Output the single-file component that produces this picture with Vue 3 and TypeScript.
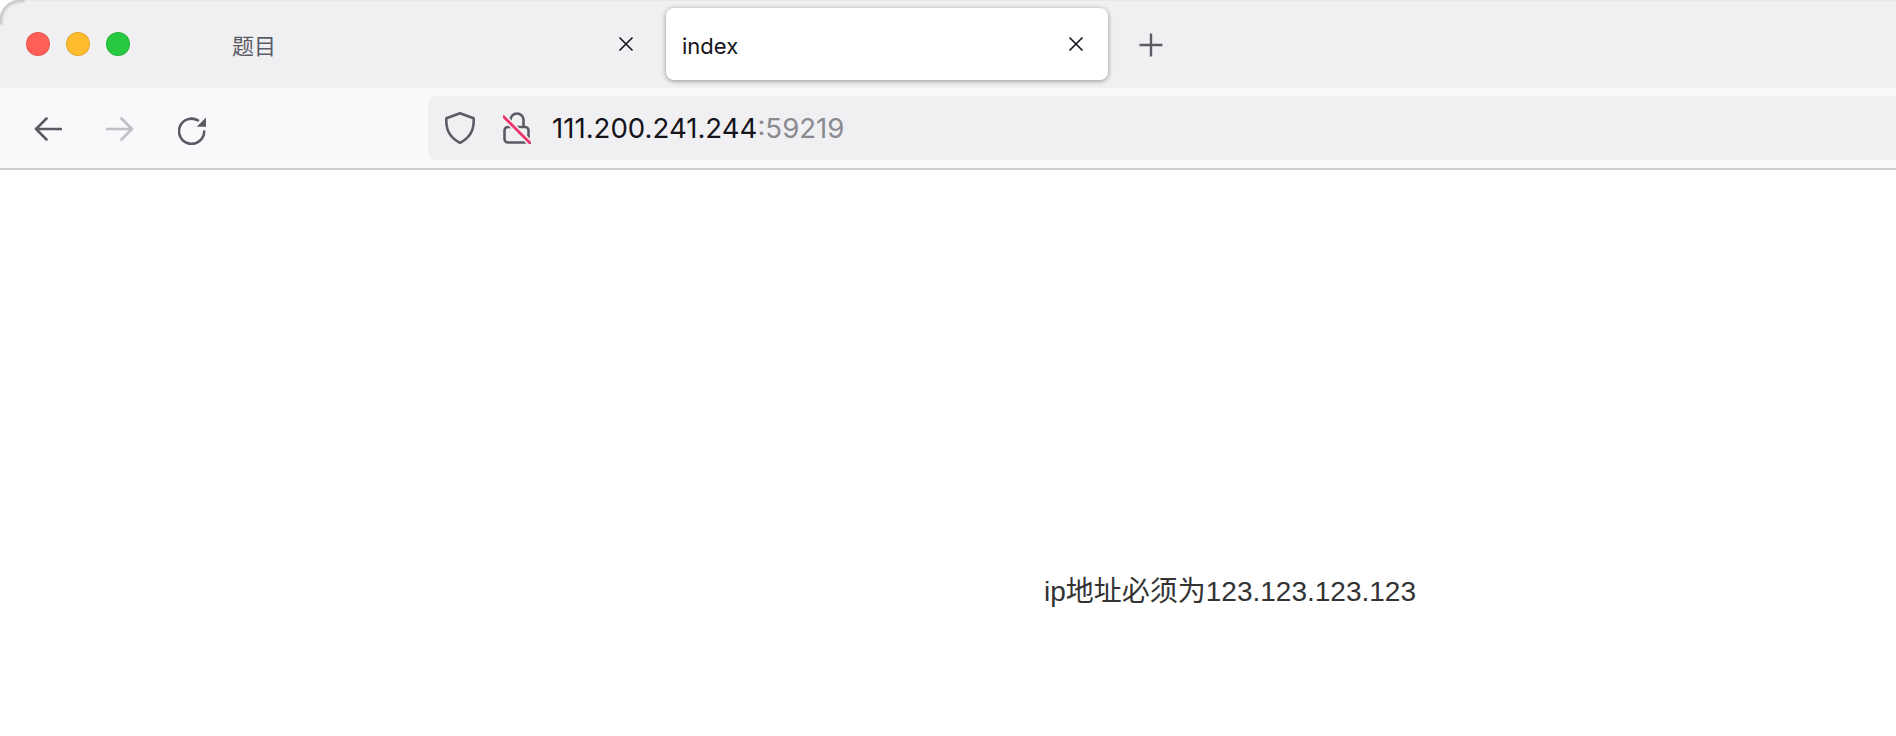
<template>
  <div class="browser">
    <header class="tab-bar">
      <div class="lights">
        <span class="light red"></span>
        <span class="light yellow"></span>
        <span class="light green"></span>
      </div>
      <div class="tab inactive">
        <span class="tab-title">题目</span>
        <svg class="close" width="18" height="18" viewBox="0 0 18 18">
          <path d="M2.5 2.5 15.5 15.5M15.5 2.5 2.5 15.5" />
        </svg>
      </div>
      <div class="tab active">
        <span class="tab-title">index</span>
        <svg class="close" width="18" height="18" viewBox="0 0 18 18">
          <path d="M2.5 2.5 15.5 15.5M15.5 2.5 2.5 15.5" />
        </svg>
      </div>
      <svg class="plus" width="24" height="24" viewBox="0 0 24 24">
        <path d="M12 0.5V23.5M0.5 12H23.5" />
      </svg>
    </header>

    <nav class="toolbar">
      <div class="nav-buttons">
        <svg width="28" height="24" viewBox="0 0 28 24" class="nav-icon">
          <path d="M27 12H2M12.5 1.5 2 12 12.5 22.5" />
        </svg>
        <svg width="28" height="24" viewBox="0 0 28 24" class="nav-icon disabled">
          <path d="M1 12H26M15.5 1.5 26 12 15.5 22.5" />
        </svg>
        <svg width="28" height="28" viewBox="0 0 28 28" class="nav-icon reload">
          <path d="M26.2 14.5A12.6 12.6 0 1 1 20 3.4" />
          <path class="solid" d="M28 0.5V9.8H18.7Z" />
        </svg>
      </div>
      <div class="url-bar">
        <svg width="30" height="32" viewBox="0 0 30 32" class="shield">
          <path d="M15 1.2 28.6 6.2C29.4 16.5 25 25.8 15 30.8 5 25.8 0.6 16.5 1.4 6.2Z" />
        </svg>
        <svg width="28" height="32" viewBox="0 0 28 32" class="lock">
          <path d="M7.5 15V8A6.5 6.5 0 0 1 20.5 8V15" />
          <rect x="1.5" y="15" width="24" height="15.5" rx="3.5" />
          <path class="gap" d="M0.5 4.5 27 31" />
          <path class="slash" d="M0.5 4.5 27 31" />
        </svg>
        <span class="url">111.200.241.244<span class="port">:59219</span></span>
      </div>
    </nav>

    <main class="page">
      <p class="message">ip地址必须为123.123.123.123</p>
    </main>
  </div>
</template>

<script setup lang="ts">
</script>

<style>
html,
body {
  margin: 0;
  background: #fff;
}
</style>

<style scoped>
.browser {
  width: 1896px;
  height: 736px;
  overflow: hidden;
  background: #fff;
  font-family: Inter, "Noto Sans CJK SC", sans-serif;
}

.tab-bar {
  position: relative;
  height: 88px;
  display: flex;
  align-items: flex-start;
  background: #f0f0f3;
  border-top: 1px solid #e8e8ea;
  border-top-left-radius: 20px;
  box-sizing: border-box;
}

/* soft grey arc of the window corner */
.tab-bar::before {
  content: "";
  position: absolute;
  left: -1px;
  top: -2px;
  width: 26px;
  height: 26px;
  box-sizing: border-box;
  border-top: 3px solid #c2c2c2;
  border-left: 3px solid #c2c2c2;
  border-top-left-radius: 22px;
  filter: blur(1px);
  -webkit-mask-image: linear-gradient(135deg, #000 50%, transparent 80%);
  mask-image: linear-gradient(135deg, #000 50%, transparent 80%);
}

.lights {
  display: flex;
  gap: 16px;
  margin: 31px 0 0 26px;
}

.light {
  width: 24px;
  height: 24px;
  border-radius: 50%;
  box-sizing: border-box;
  border: 1px solid rgba(0, 0, 0, 0.1);
}

.red {
  background: #ff5f57;
}

.yellow {
  background: #febc2e;
}

.green {
  background: #28c840;
}

.tab {
  height: 72px;
  box-sizing: border-box;
  display: flex;
  align-items: center;
  margin-top: 7px;
}

.tab-title {
  flex: 1;
}

.inactive {
  width: 526px;
  padding-left: 102px;
  color: #5b5b66;
  font-size: 22px;
}

.inactive .tab-title {
  padding-bottom: 1px;
}

.inactive .close {
  margin-right: 21px;
}

.active {
  width: 442px;
  margin-left: 10px;
  padding-left: 16px;
  background: #fff;
  border-radius: 8px;
  box-shadow: 0 1px 5px rgba(0, 0, 0, 0.4);
  color: #15141a;
  font-size: 22px;
}

.active .tab-title {
  padding-top: 3px;
}

.close {
  fill: none;
  stroke: #15141a;
  stroke-width: 1.6;
  margin: -1px 23px 0 0;
}

.plus {
  fill: none;
  stroke: #5b5b66;
  stroke-width: 2.4;
  margin: 32px 0 0 31px;
}

.toolbar {
  height: 80px;
  display: flex;
  align-items: center;
  background: #f9f9fb;
}

.nav-buttons {
  width: 428px;
  padding: 2px 0 0 34px;
  box-sizing: border-box;
  display: flex;
  align-items: center;
  gap: 44px;
  flex: none;
}

.nav-icon {
  fill: none;
  stroke: #5b5b66;
  stroke-width: 2.6;
  stroke-linecap: round;
  stroke-linejoin: round;
}

.nav-icon .solid {
  fill: #5b5b66;
  stroke: none;
}

.nav-icon.disabled {
  stroke: #bfbfc4;
}

.reload {
  margin-top: 3px;
}

.url-bar {
  flex: 1;
  height: 64px;
  display: flex;
  align-items: center;
  background: #f0f0f3;
  border-radius: 8px 0 0 8px;
  padding-left: 17px;
}

.shield,
.lock {
  fill: none;
  stroke: #5b5b66;
  stroke-width: 2.6;
  stroke-linejoin: round;
  flex: none;
}

.lock {
  margin-left: 28px;
}

.lock .gap {
  stroke: #f0f0f3;
  stroke-width: 6;
}

.lock .slash {
  stroke: #f0336a;
  stroke-width: 2.8;
  stroke-linecap: round;
}

.url {
  margin-left: 21px;
  font-size: 27.6px;
  color: #15141a;
}

.port {
  color: #8a8a90;
}

.page {
  border-top: 2px solid #cccccc;
  height: 566px;
  box-sizing: border-box;
}

.message {
  margin: 0;
  padding: 404px 0 0 1044px;
  font-family: "Liberation Sans", "Noto Sans CJK SC", sans-serif;
  font-size: 28px;
  line-height: 36px;
  color: #333;
}
</style>
